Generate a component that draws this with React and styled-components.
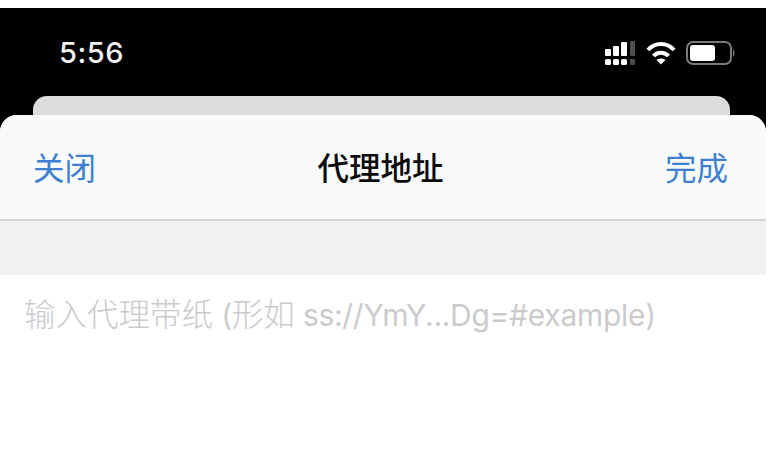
import React from "react";
import styled, { createGlobalStyle } from "styled-components";

const Global = createGlobalStyle`
  html, body { margin: 0; padding: 0; background: #fff; }
  body { width: 768px; height: 452px; overflow: hidden; font-family: "Inter", "Liberation Sans", "Noto Sans CJK SC", sans-serif; }
`;
const Page = styled.div`
  padding: 8px 2px 0 0;
  height: 444px;
  display: flex;
  flex-direction: column;
`;
const Screen = styled.div`
  flex: 1;
  background: #000;
  display: flex;
  flex-direction: column;
`;
const StatusBar = styled.div`
  height: 88px;
  display: flex;
  align-items: flex-start;
  justify-content: space-between;
  padding: 28px 31px 0 59px;
  box-sizing: border-box;
  color: #fff;
`;
const Time = styled.span`
  font-size: 29px;
  line-height: 34px;
  font-weight: 500;
  color: #f2f2f2;
  letter-spacing: 0.5px;
`;
const StatusIcons = styled.div`
  display: flex;
  align-items: center;
  gap: 10px;
  padding-top: 5px;
`;
const BackCard = styled.div`
  height: 19px;
  margin: 0 36px 0 33px;
  background: #dcdcdc;
  border-radius: 14px 14px 0 0;
`;
const Sheet = styled.div`
  flex: 1;
  background: #fff;
  border-radius: 17px 17px 0 0;
  overflow: hidden;
  display: flex;
  flex-direction: column;
`;
const NavBar = styled.div`
  flex: none;
  height: 102px;
  box-sizing: content-box;
  background: #f9fafc;
  border-bottom: 2px solid #d2d2d6;
  display: flex;
  align-items: center;
  justify-content: space-between;
  padding: 0 38px 2px 33px;
  font-family: "Noto Sans CJK SC", sans-serif;
`;
const NavButton = styled.span`
  color: #3f7fd0;
  font-size: 31.5px;
  line-height: 40px;
`;
const NavTitle = styled.span`
  color: #0b0b0b;
  font-size: 31.5px;
  line-height: 40px;
  font-weight: 500;
`;
const Spacer = styled.div`
  height: 54px;
  flex: none;
  background: #f1f1f4;
`;
const Field = styled.div`
  padding: 17px 24px 20px;
  color: #cbcbce;
  font-size: 30px;
  line-height: 40px;
  white-space: nowrap;
  font-family: "Inter", "Noto Sans CJK SC", sans-serif;
  letter-spacing: -0.3px;
`;
const Cjk = styled.span`
  font-family: "Noto Sans CJK SC", sans-serif;
  font-size: 31.5px;
  font-weight: 300;
  letter-spacing: 0;
`;

const Cellular = () => (
  <svg width="31" height="24" viewBox="0 0 31 24">
    <g fill="#fff">
      <rect x="0" y="8" width="6" height="7" rx="1" />
      <rect x="8" y="5" width="6" height="10" rx="1" />
      <rect x="16" y="1" width="6" height="14" rx="1" />
      <rect x="0" y="18" width="6" height="6" rx="1.5" />
      <rect x="8" y="18" width="6" height="6" rx="1.5" />
      <rect x="16" y="18" width="6" height="6" rx="1.5" />
    </g>
    <rect x="25" y="0" width="5" height="15" rx="1" fill="#4d4d4d" />
    <rect x="25" y="18" width="5" height="6" rx="1" fill="#4d4d4d" />
  </svg>
);
const Wifi = () => (
  <svg width="30" height="24" viewBox="0 0 30 24" fill="none" stroke="#fff" strokeWidth="4">
    <path d="M2 9 C9 1 21 1 28 9" />
    <path d="M7.5 15 C11.5 10.5 18.5 10.5 22.5 15" />
    <path d="M15 23.5 L10.5 19 C13 17 17 17 19.5 19 Z" fill="#fff" stroke="none" />
  </svg>
);
const Battery = () => (
  <svg width="49" height="24" viewBox="0 0 49 24">
    <rect x="1" y="1" width="44" height="22" rx="6" fill="none" stroke="#7a7a7a" strokeWidth="2" />
    <rect x="4" y="4" width="25" height="16" rx="3" fill="#fff" />
    <path d="M47 8.5 C49 9.5 49 14.5 47 15.5 Z" fill="#7a7a7a" />
  </svg>
);

export default function App() {
  return (
    <Page>
      <Global />
      <Screen>
        <StatusBar>
          <Time>5:56</Time>
          <StatusIcons>
            <Cellular />
            <Wifi />
            <Battery />
          </StatusIcons>
        </StatusBar>
        <BackCard />
        <Sheet>
          <NavBar>
            <NavButton>关闭</NavButton>
            <NavTitle>代理地址</NavTitle>
            <NavButton>完成</NavButton>
          </NavBar>
          <Spacer />
          <Field>
            <Cjk>输入代理带纸</Cjk> (<Cjk>形如</Cjk> ss://YmY...Dg=#example)
          </Field>
        </Sheet>
      </Screen>
    </Page>
  );
}
